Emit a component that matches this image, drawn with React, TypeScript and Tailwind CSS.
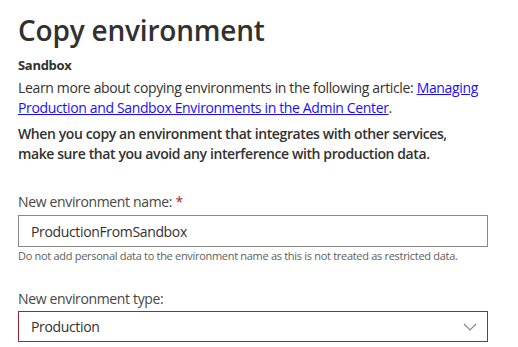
import React from "react";

export default function App() {
  return (
    <div
      className="w-[518px] h-[347px] bg-white overflow-hidden pl-[18px] pr-[20px] text-[#323130]"
      style={{ fontFamily: '"Segoe UI", "Open Sans", sans-serif' }}
    >
      <h1 className="text-[28px] font-semibold leading-[36px] pt-[12px] tracking-[-0.2px]">Copy environment</h1>
      <div className="text-[13px] font-bold leading-[20px] mt-[7px] tracking-[-0.3px]">Sandbox</div>
      <p className="text-[14px] leading-[20px] mt-[3px] tracking-[-0.35px]">
        Learn more about copying environments in the following article:{" "}
        <a href="#" className="text-[#1a0dff] underline">Managing Production and Sandbox Environments in the Admin Center</a>.
      </p>
      <p className="w-[452px] text-[14px] font-semibold leading-[20px] mt-[6px] tracking-[-0.4px]">
        When you copy an environment that integrates with other services, make sure that you avoid any interference with production data.
      </p>
      <div className="mt-[28px] w-[470px]">
        <label className="block text-[14px] leading-[20px] text-[#484644] tracking-[-0.35px]">
          New environment name: <span className="text-[#a4262c]">*</span>
        </label>
        <div className="mt-[3px] h-[32px] border border-[#8a8886] flex items-center px-[12px] text-[14px] tracking-[-0.35px]">
          ProductionFromSandbox
        </div>
        <div className="text-[11px] leading-[16px] text-[#605e5c] mt-[1px] tracking-[-0.3px]">
          Do not add personal data to the environment name as this is not treated as restricted data.
        </div>
        <label className="block text-[14px] leading-[20px] text-[#484644] mt-[25px] tracking-[-0.35px]">New environment type:</label>
        <div className="mt-[2px] h-[31px] border border-[#a4262c] flex items-center justify-between pl-[12px] pr-[10px] text-[14px] tracking-[-0.35px]">
          <span>Production</span>
          <svg width="14" height="8" viewBox="0 0 14 8" fill="none">
            <path d="M1 1 L7 7 L13 1" stroke="#8a8886" strokeWidth="1.2" />
          </svg>
        </div>
      </div>
    </div>
  );
}
